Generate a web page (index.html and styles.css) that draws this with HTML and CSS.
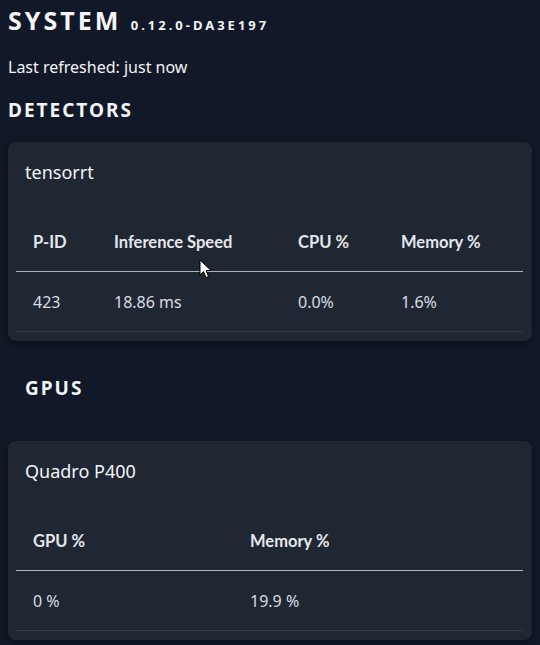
FILE: index.html
```html
<!DOCTYPE html>
<html>
<head>
<meta charset="utf-8">
<link rel="stylesheet" href="styles.css">
</head>
<body>
<div class="page">
  <h1 class="title">System <span class="version">0.12.0-DA3E197</span></h1>
  <p class="refreshed">Last refreshed: just now</p>
  <h2 class="section">Detectors</h2>
  <div class="card">
    <div class="card-title">tensorrt</div>
    <table class="tbl">
      <colgroup><col class="c81"><col class="c184"><col class="c103"><col></colgroup>
      <thead><tr><th>P-ID</th><th>Inference Speed</th><th>CPU %</th><th>Memory %</th></tr></thead>
      <tbody><tr><td>423</td><td>18.86 ms</td><td>0.0%</td><td>1.6%</td></tr></tbody>
    </table>
  </div>
  <h2 class="section indent">GPUs</h2>
  <div class="card">
    <div class="card-title">Quadro P400</div>
    <table class="tbl">
      <colgroup><col class="c217"><col></colgroup>
      <thead><tr><th>GPU %</th><th>Memory %</th></tr></thead>
      <tbody><tr><td>0 %</td><td>19.9 %</td></tr></tbody>
    </table>
  </div>
</div>
<svg class="cursor" width="14" height="20" viewBox="0 0 14 20"><path d="M1 1 L1 16 L4.5 12.5 L7 18.5 L9.5 17.5 L7 11.5 L12 11.5 Z" fill="#fff" stroke="#000" stroke-width="1"/></svg>
</body>
</html>
```
FILE: styles.css
```css
html, body { margin: 0; padding: 0; }
body {
  background: #111827;
  color: #f3f4f6;
  font-family: "Noto Sans", "Open Sans", sans-serif;
  width: 540px;
  height: 645px;
  overflow: hidden;
  position: relative;
}
.page { padding: 0 8px; }
.title {
  margin: 0;
  padding-top: 4px;
  font-size: 25px;
  line-height: 32px;
  font-weight: 700;
  text-transform: uppercase;
  letter-spacing: 3px;
}
.version {
  font-size: 13px;
  letter-spacing: 3px;
}
.refreshed {
  margin: 0;
  margin-top: 14px;
  font-size: 16px;
  line-height: 24px;
}
.section {
  margin: 0;
  margin-top: 15px;
  font-size: 19px;
  line-height: 32px;
  font-weight: 700;
  text-transform: uppercase;
  letter-spacing: 2px;
}
.section.indent { padding-left: 17px; margin-top: 31px; margin-bottom: 37px; }
.card {
  margin-top: 16px;
  background: #1f2733;
  border-radius: 8px;
  padding: 8px 9px 9px 8px;
  box-shadow: 0 2px 6px rgba(0,0,0,0.45);
}
.section.indent + .card { margin-top: 0; }
.card-title {
  padding: 8px 9px;
  margin-bottom: 18px;
  font-size: 18px;
  line-height: 28px;
}
.tbl {
  width: 100%;
  border-collapse: collapse;
  table-layout: fixed;
}
.c81 { width: 81px; }
.c184 { width: 184px; }
.c103 { width: 103px; }
.c217 { width: 217px; }
.tbl th, .tbl td {
  text-align: left;
  padding: 0 0 0 17px;
  height: 59px;
  vertical-align: middle;
}
.tbl th {
  font-family: Lato, "Noto Sans", sans-serif;
  font-size: 16.5px;
  font-weight: 700;
  color: #e5e7eb;
  border-bottom: 1px solid #aeb4bd;
}
.tbl td {
  font-size: 16px;
  color: #d9dde3;
  border-bottom: 1px solid #343c49;
}
.cursor { position: absolute; left: 199px; top: 259px; }
```
